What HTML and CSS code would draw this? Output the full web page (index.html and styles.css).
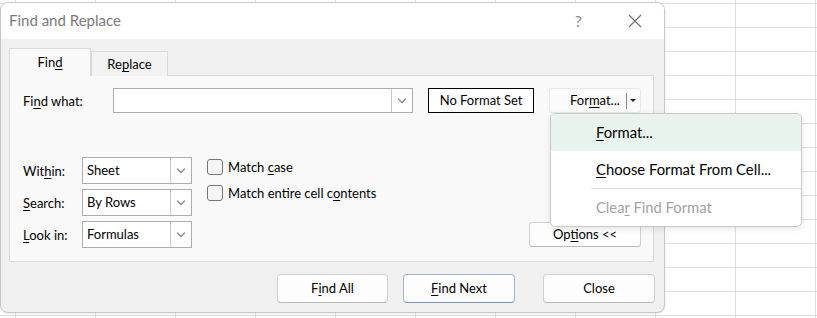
FILE: index.html
```html
<!DOCTYPE html>
<html lang="en">
<head>
  <meta charset="UTF-8">
  <title>Find and Replace</title>
  <link rel="stylesheet" href="styles.css">
</head>
<body>
  <div class="dialog">
    <div class="titlebar">
      <span class="title">Find and Replace</span>
      <span class="help">?</span>
      <svg class="close-x" width="14" height="14" viewBox="0 0 14 14">
        <path d="M1 1 L13 13 M13 1 L1 13" stroke="#6b6b6b" stroke-width="1.1" fill="none"/>
      </svg>
    </div>

    <div class="dialog-body">
      <div class="tabs">
        <div class="tab active"><span>Fin<u>d</u></span></div>
        <div class="tab"><span>Re<u>p</u>lace</span></div>
      </div>

      <div class="panel">
        <div class="find-row">
          <label class="label find-label">Fi<u>n</u>d what:</label>
          <div class="combo find-combo">
            <div class="combo-text"></div>
            <div class="combo-btn"><span class="chev"></span></div>
          </div>
          <div class="no-format"><span>No Format Set</span></div>
          <div class="format-wrap">
            <div class="format-btn">
              <span class="format-text">For<u>m</u>at...</span>
              <span class="split"></span>
              <span class="tri"></span>
            </div>
            <div class="menu">
              <div class="menu-item hover"><span><u>F</u>ormat...</span></div>
              <div class="menu-item"><span><u>C</u>hoose Format From Cell...</span></div>
              <div class="menu-sep"></div>
              <div class="menu-item disabled"><span>Clea<u>r</u> Find Format</span></div>
            </div>
          </div>
        </div>

        <div class="options-area">
          <div class="selects">
            <label class="label">Wit<u>h</u>in:</label>
            <div class="combo sel">
              <div class="combo-text"><span>Sheet</span></div>
              <div class="combo-btn"><span class="chev"></span></div>
            </div>
            <label class="label"><u>S</u>earch:</label>
            <div class="combo sel">
              <div class="combo-text"><span>By Rows</span></div>
              <div class="combo-btn"><span class="chev"></span></div>
            </div>
            <label class="label"><u>L</u>ook in:</label>
            <div class="combo sel">
              <div class="combo-text"><span>Formulas</span></div>
              <div class="combo-btn"><span class="chev"></span></div>
            </div>
          </div>

          <div class="checks">
            <div class="check"><span class="box"></span><span>Match <u>c</u>ase</span></div>
            <div class="check"><span class="box"></span><span>Match entire cell c<u>o</u>ntents</span></div>
          </div>

          <div class="options-btn"><span>Op<u>t</u>ions &lt;&lt;</span></div>
        </div>
      </div>

      <div class="actions">
        <div class="btn find-all"><span>F<u>i</u>nd All</span></div>
        <div class="btn find-next default"><span><u>F</u>ind Next</span></div>
        <div class="btn close"><span>Close</span></div>
      </div>
    </div>
  </div>
</body>
</html>
```

FILE: styles.css
```css
* {
  margin: 0;
  padding: 0;
  box-sizing: border-box;
}

body {
  width: 817px;
  height: 318px;
  overflow: hidden;
  padding-top: 2px;
  font-family: Lato, "Noto Sans", sans-serif;
  font-size: 13px;
  color: #000;
  background-color: #fff;
  background-image:
    linear-gradient(to right, #dedede 1px, transparent 1px),
    linear-gradient(to bottom, #dedede 1px, transparent 1px);
  background-size: 80px 24px;
  background-position: 15px 3px;
}

u {
  text-decoration-thickness: 1px;
  text-underline-offset: 2px;
}

.dialog {
  width: 665px;
  height: 311px;
  border: 1px solid #c6c6c6;
  border-radius: 8px;
  background: #f0f0f0;
  box-shadow: 0 1px 3px rgba(0, 0, 0, 0.08);
}

.titlebar {
  height: 36px;
  background: #fff;
  border-radius: 7px 7px 0 0;
  display: flex;
  align-items: center;
  padding-left: 8px;
}

.title {
  font-size: 15px;
  color: #7a7a7a;
  flex: 1;
  padding-bottom: 2px;
}

.help {
  color: #8a8a8a;
  font-size: 16px;
  margin-right: 46px;
  padding-bottom: 2px;
}

.close-x {
  margin-right: 22px;
}

.dialog-body {
  padding: 9px 9px 0 8px;
}

.tabs {
  display: flex;
  align-items: flex-end;
  position: relative;
  z-index: 1;
  margin-bottom: -1px;
}

.tab {
  height: 25px;
  width: 77px;
  border: 1px solid #dadada;
  border-bottom: none;
  background: #f3f3f3;
  display: flex;
  align-items: center;
  justify-content: center;
}

.tab.active {
  width: 82px;
  height: 28px;
  background: #f9f9f9;
  padding-bottom: 1px;
}

.panel {
  width: 645px;
  height: 187px;
  border: 1px solid #dadada;
  background: #f9f9f9;
  padding: 12px 12px 0 13px;
}

.find-row {
  display: flex;
  align-items: center;
  height: 25px;
}

.label {
  width: 90px;
  white-space: nowrap;
}

.combo {
  display: flex;
  background: #fff;
  border: 1px solid #acacac;
}

.combo-text {
  flex: 1;
  display: flex;
  align-items: center;
  padding-left: 4px;
  padding-bottom: 1px;
}

.combo-btn {
  width: 21px;
  border-left: 1px solid #c8c8c8;
  display: flex;
  align-items: center;
  justify-content: center;
}

.chev {
  width: 6px;
  height: 6px;
  border-right: 1px solid #707070;
  border-bottom: 1px solid #707070;
  transform: translateY(-2px) rotate(45deg);
}

.find-combo {
  width: 301px;
  height: 25px;
}

.no-format {
  margin-left: 15px;
  width: 106px;
  height: 25px;
  border: 1px solid #000;
  background: #fff;
  display: flex;
  align-items: center;
  justify-content: center;
  padding-bottom: 1px;
}

.format-wrap {
  position: relative;
  margin-left: 15px;
}

.format-btn {
  width: 92px;
  height: 25px;
  border: 1px solid #e8e8e8;
  border-radius: 3px;
  background: #fbfbfb;
  display: flex;
  align-items: center;
  padding-left: 20px;
}

.format-text {
  padding-bottom: 1px;
}

.split {
  width: 1px;
  height: 16px;
  background: #8a8a8a;
  margin-left: auto;
  margin-right: 3px;
}

.tri {
  margin-right: 4px;
  border-left: 3px solid transparent;
  border-right: 3px solid transparent;
  border-top: 3px solid #222;
}

.menu {
  position: absolute;
  top: 25px;
  left: 1px;
  width: 252px;
  height: 114px;
  background: #fff;
  border: 1px solid #c9c9c9;
  border-radius: 5px;
  box-shadow: 0 2px 6px rgba(0, 0, 0, 0.1);
  z-index: 5;
  font-size: 14.8px;
}

.menu-item {
  height: 37px;
  display: flex;
  align-items: center;
  padding-left: 45px;
  padding-bottom: 1px;
  white-space: nowrap;
}

.menu-item.hover {
  background: #e9f3ed;
  border-radius: 4px 4px 0 0;
}

.menu-item.disabled {
  color: #a3a3a3;
}

.menu-sep {
  height: 1px;
  margin-left: 40px;
  background: #dcdcdc;
}

.options-area {
  display: flex;
  margin-top: 44px;
}

.selects {
  display: grid;
  grid-template-columns: 59px 110px;
  row-gap: 5px;
  align-items: center;
}

.sel {
  height: 27px;
}

.checks {
  margin-left: 15px;
  margin-top: 2px;
  display: flex;
  flex-direction: column;
  gap: 10px;
}

.check {
  display: flex;
  align-items: center;
  gap: 5px;
  height: 16px;
  white-space: nowrap;
}

.box {
  width: 16px;
  height: 16px;
  border: 1px solid #767676;
  border-radius: 3px;
  background: #f5f5f5;
}

.options-btn {
  margin-left: auto;
  align-self: flex-end;
  margin-bottom: 1px;
  width: 112px;
  height: 25px;
  border: 1px solid #d0d0d0;
  border-bottom-color: #b8b8b8;
  border-radius: 3px;
  background: #fdfdfd;
  display: flex;
  align-items: center;
  justify-content: center;
  padding-bottom: 1px;
}

.actions {
  display: flex;
  justify-content: flex-end;
  margin-top: 12px;
}

.btn {
  height: 29px;
  width: 112px;
  border: 1px solid #d0d0d0;
  border-bottom-color: #b8b8b8;
  border-radius: 4px;
  background: #fdfdfd;
  display: flex;
  align-items: center;
  justify-content: center;
  padding-bottom: 1px;
}

.find-all {
  width: 111px;
}

.find-next {
  margin-left: 15px;
}

.btn.default {
  border-color: #9fb4cf;
  border-bottom-color: #7c97bb;
}

.close {
  margin-left: 28px;
}
```
